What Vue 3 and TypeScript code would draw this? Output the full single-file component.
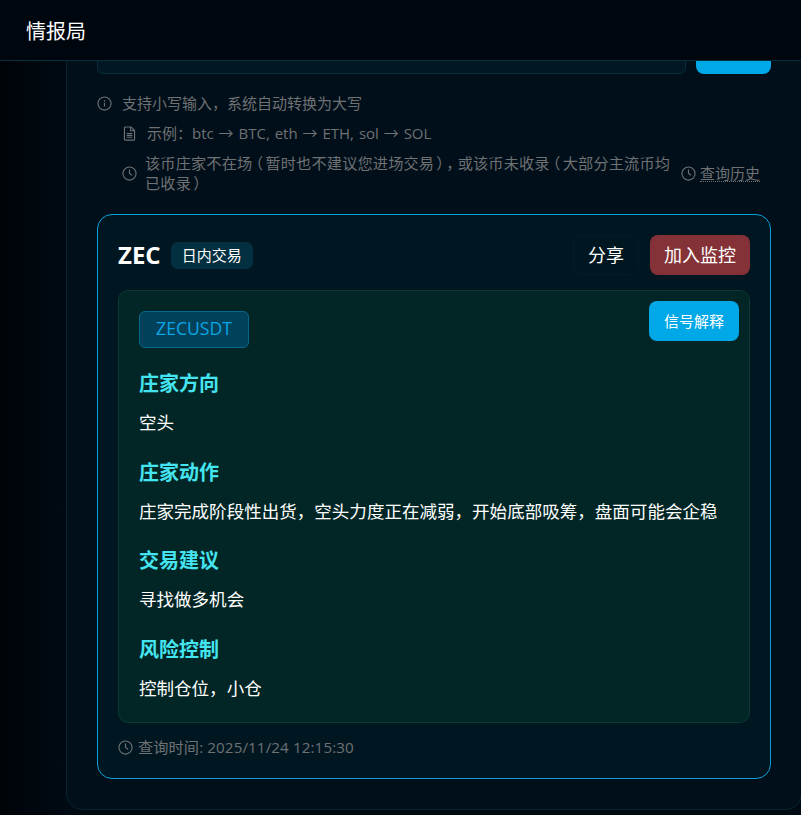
<script setup lang="ts">
interface Section { title: string; body: string }
const sections: Section[] = [
  { title: '庄家方向', body: '空头' },
  { title: '庄家动作', body: '庄家完成阶段性出货，空头力度正在减弱，开始底部吸筹，盘面可能会企稳' },
  { title: '交易建议', body: '寻找做多机会' },
  { title: '风险控制', body: '控制仓位，小仓' },
]
const notice = '该币庄家不在场\u2009（\u2009暂时也不建议您进场交易\u2009）\u2009，\u2009或该币未收录\u2009（\u2009大部分主流币均已收录\u2009）'
</script>

<template>
  <div class="page">
    <header class="topbar"><span class="brand">情报局</span></header>
    <main class="panel">
      <div class="search">
        <div class="input"></div>
        <div class="submit"></div>
      </div>
      <div class="hints">
        <div class="hint">
          <svg class="ico" viewBox="0 0 16 16" fill="none" stroke="currentColor" stroke-width="1.2"><circle cx="8" cy="8" r="7"/><path d="M8 7.2v4M8 4.4v1.4"/></svg>
          <span>支持小写输入，系统自动转换为大写</span>
        </div>
        <div class="hint sub">
          <svg class="ico" viewBox="0 0 16 16" fill="none" stroke="currentColor" stroke-width="1.2"><path d="M2.6 2a1 1 0 0 1 1-1h6L13.4 4.8V14a1 1 0 0 1-1 1H3.600a1 1 0 0 1-1-1zM9.200 1v4h4.200M5 8h6M5 10h6M5 12h6"/></svg>
          <span class="example">示例：btc → BTC, eth → ETH, sol → SOL</span>
        </div>
        <div class="hint sub third">
          <svg class="ico" viewBox="0 0 16 16" fill="none" stroke="currentColor" stroke-width="1.2"><circle cx="8" cy="8" r="7"/><path d="M8 3.800V8l2.800 1.800"/></svg>
          <span class="wrap">{{ notice }}</span>
          <span class="history">
            <svg class="ico" viewBox="0 0 16 16" fill="none" stroke="currentColor" stroke-width="1.2"><circle cx="8" cy="8" r="7"/><path d="M8 3.800V8l2.800 1.800"/></svg>
            <span class="link">查询历史</span>
          </span>
        </div>
      </div>

      <section class="card">
        <div class="card-head">
          <div class="name">
            <strong class="coin">ZEC</strong>
            <span class="tag">日内交易</span>
          </div>
          <div class="actions">
            <button class="btn share">分享</button>
            <button class="btn watch">加入监控</button>
          </div>
        </div>
        <div class="signal">
          <button class="explain">信号解释</button>
          <span class="symbol">ZECUSDT</span>
          <div v-for="s in sections" :key="s.title" class="block">
            <h3 class="title">{{ s.title }}</h3>
            <p class="body">{{ s.body }}</p>
          </div>
        </div>
        <div class="time">
          <svg class="ico" viewBox="0 0 16 16" fill="none" stroke="currentColor" stroke-width="1.2"><circle cx="8" cy="8" r="7"/><path d="M8 3.800V8l2.800 1.800"/></svg>
          <span class="stamp">查询时间: 2025/11/24 12:15:30</span>
        </div>
      </section>
    </main>
  </div>
</template>

<style>
html, body { margin: 0; background: #00060c; overflow: hidden; }
</style>

<style scoped>
* { box-sizing: border-box; }
.page {
  position: relative;
  height: 815px;
  overflow: hidden;
  padding-left: 66px;
  background: linear-gradient(90deg, #000409, #000a12 66px);
  font-family: "Open Sans", "Noto Sans CJK SC", sans-serif;
  color: #fff;
}
.topbar {
  position: absolute;
  z-index: 2;
  top: 0; left: 0; right: 0;
  height: 61px;
  display: flex;
  align-items: center;
  padding-left: 26px;
  background: #00060e;
  border-bottom: 1px solid #04303d;
}
.brand { font-size: 20px; color: #fff; }
.panel {
  margin-top: -10px;
  height: 820px;
  width: 736px;
  padding: 30px 30px 0;
  background: #000f1a;
  border: 1px solid #052430;
  border-radius: 16px;
}
.search { display: flex; gap: 10px; height: 53px; }
.input {
  flex: 1;
  background: #011722;
  border: 1px solid #06303c;
  border-radius: 6px;
}
.submit { width: 75px; background: #00a8e8; border-radius: 8px; }
.hints { padding-top: 19px; font-size: 15px; color: #6f7173; }
.hint { display: flex; align-items: center; gap: 10px; line-height: 20px; margin-bottom: 10px; }
.hint.sub { padding-left: 25px; }
.example { word-spacing: 1px; }
.third { margin-bottom: 21px; }
.wrap { width: 526px; margin-left: -2px; font-size: 15.2px; letter-spacing: 0.15px; font-feature-settings: "palt"; }
.ico { width: 15px; height: 15px; flex: none; }
.history { display: inline-flex; align-items: center; gap: 4px; font-size: 15px; margin-top: 1px; }
.link { border-bottom: 1px dotted #6f7173; line-height: 16px; }
.card {
  height: 565px;
  background: #001722;
  border: 1px solid #0aa0dc;
  border-radius: 15px;
  padding: 20px;
}
.card-head { display: flex; justify-content: space-between; align-items: center; height: 40px; margin-bottom: 15px; }
.name { display: flex; align-items: center; gap: 10px; }
.coin { font-size: 24px; font-weight: 700; line-height: 30px; }
.tag {
  font-size: 15px;
  line-height: 27px;
  padding: 0 11px;
  border-radius: 7px;
  background: #023040;
}
.actions { display: flex; gap: 11px; }
.btn {
  font: inherit;
  font-size: 18px;
  height: 40px;
  border-radius: 8px;
  color: #fff;
  padding: 0 0 2px;
  cursor: pointer;
}
.share { width: 66px; background: transparent; border: 1px dotted #04222e; }
.watch { width: 100px; background: #843237; border: 0; }
.signal {
  position: relative;
  height: 433px;
  padding: 20px 20px 0;
  background: #022625;
  border: 1px solid #0a3a30;
  border-radius: 10px;
}
.explain {
  position: absolute;
  top: 10px; right: 10px;
  width: 90px; height: 40px;
  padding: 0 0 2px;
  font: inherit;
  font-size: 15px;
  color: #fff;
  background: #00a8e8;
  border: 0;
  border-radius: 8px;
}
.symbol {
  display: inline-block;
  width: 110px;
  height: 37px;
  line-height: 33px;
  text-align: center;
  font-size: 17.6px;
  color: #0aa5e6;
  background: #01425a;
  border: 1px solid #05688c;
  border-radius: 6px;
  margin-bottom: 21px;
}
.block { margin-bottom: 20.67px; }
.title { margin: 0 0 8px; font-size: 20px; line-height: 30px; font-weight: 700; color: #44e4f0; }
.body { margin: 0; font-size: 17.55px; line-height: 30px; color: #fff; }
.time {
  display: flex;
  align-items: center;
  gap: 5px;
  margin-top: 14px;
  font-size: 15.2px;
  line-height: 20px;
  color: #6f7173;
}
.stamp { letter-spacing: 0.1px; }
</style>
